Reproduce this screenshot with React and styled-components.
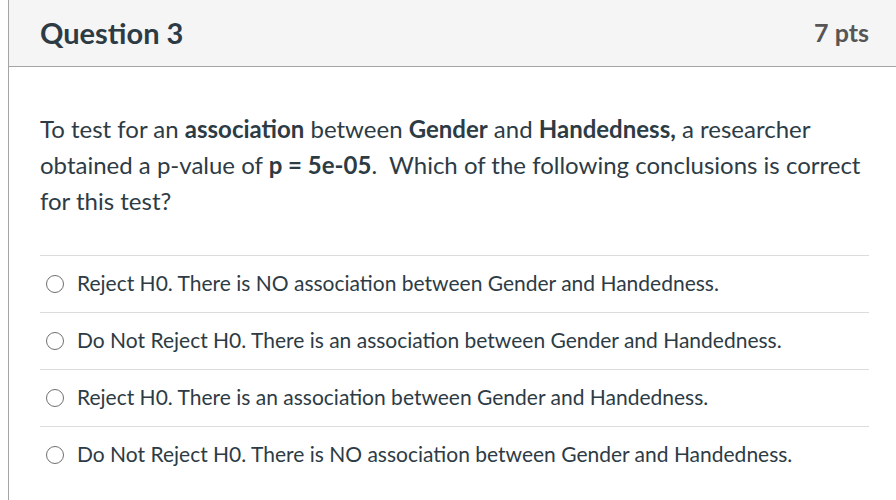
import React from 'react';
import styled, {createGlobalStyle} from 'styled-components';

const GlobalStyle = createGlobalStyle`
  body {
    margin: 0;
    background: #fff;
    font-family: Lato, "Liberation Sans", sans-serif;
    color: #2d3b45;
  }
`;

const Page = styled.div`
  width: 896px;
  height: 500px;
  overflow: hidden;
  background: #fff;
`;

const Card = styled.div`
  margin-left: 8px;
  border-left: 1px solid #a5a5a5;
  height: 100%;
`;

const Header = styled.div`
  display: flex;
  align-items: center;
  justify-content: space-between;
  height: 64px;
  padding: 0 27px 2px 31px;
  background: #f5f5f5;
  border-bottom: 1px solid #a5a5a5;
`;

const Title = styled.h2`
  margin: 0;
  font-size: 29px;
  font-weight: 700;
  color: #2d3b45;
`;

const Points = styled.span`
  font-size: 25px;
  font-weight: 700;
  color: #565656;
`;

const Body = styled.div`
  padding: 44px 27px 0 31px;
`;

const QuestionText = styled.p`
  margin: 0 0 36px;
  font-size: 24px;
  line-height: 36px;
  color: #2d3b45;
`;

const Answers = styled.div`
  display: flex;
  flex-direction: column;
`;

const AnswerRow = styled.label`
  display: flex;
  align-items: center;
  box-sizing: border-box;
  height: 57px;
  padding-bottom: 3px;
  border-top: 1px solid #dcdcdc;
  font-size: 21px;
  color: #2d3b45;
`;

const Radio = styled.span`
  box-sizing: border-box;
  width: 18px;
  height: 18px;
  margin: 3px 13px 0 6px;
  border: 1.5px solid #707070;
  border-radius: 50%;
  flex-shrink: 0;
`;

const answers = [
  'Reject H0. There is NO association between Gender and Handedness.',
  'Do Not Reject H0. There is an association between Gender and Handedness.',
  'Reject H0. There is an association between Gender and Handedness.',
  'Do Not Reject H0. There is NO association between Gender and Handedness.',
];

export default function App() {
  return (
    <Page>
      <GlobalStyle/>
      <Card>
        <Header>
          <Title>Question 3</Title>
          <Points>7 pts</Points>
        </Header>
        <Body>
          <QuestionText>
            To test for an <b>association</b> between <b>Gender</b> and <b>Handedness,</b> a researcher
            obtained a p-value of <b>p = 5e-05</b>.&nbsp; Which of the following conclusions is correct
            for this test?
          </QuestionText>
          <Answers>
            {answers.map(a => (
              <AnswerRow key={a}>
                <Radio/>
                {a}
              </AnswerRow>
            ))}
          </Answers>
        </Body>
      </Card>
    </Page>
  );
}
